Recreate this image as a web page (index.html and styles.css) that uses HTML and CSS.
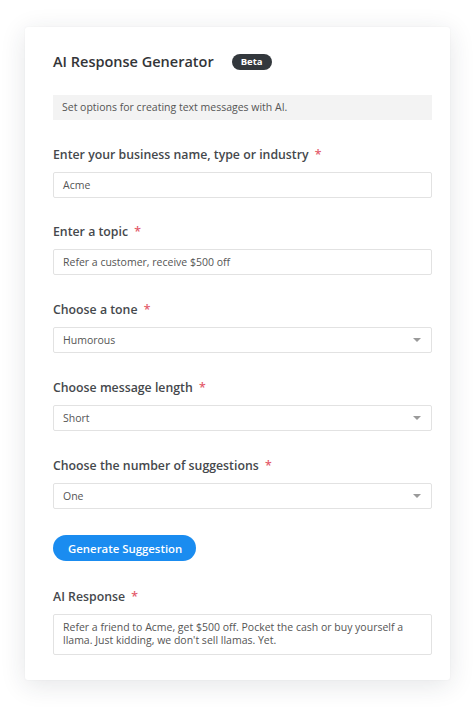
FILE: index.html
```html
<!DOCTYPE html>
<html>
<head>
<meta charset="utf-8">
<link rel="stylesheet" href="styles.css">
</head>
<body>
<div class="card">
  <div class="header">
    <h1 class="title">AI Response Generator</h1>
    <span class="badge">Beta</span>
  </div>
  <div class="info">Set options for creating text messages with AI.</div>
  <div class="field">
    <div class="label">Enter your business name, type or industry <span class="req">*</span></div>
    <div class="input">Acme</div>
  </div>
  <div class="field field-tight">
    <div class="label">Enter a topic <span class="req">*</span></div>
    <div class="input">Refer a customer, receive $500 off</div>
  </div>
  <div class="field">
    <div class="label">Choose a tone <span class="req">*</span></div>
    <div class="input select">Humorous<span class="arrow"></span></div>
  </div>
  <div class="field">
    <div class="label">Choose message length <span class="req">*</span></div>
    <div class="input select">Short<span class="arrow"></span></div>
  </div>
  <div class="field">
    <div class="label">Choose the number of suggestions <span class="req">*</span></div>
    <div class="input select">One<span class="arrow"></span></div>
  </div>
  <div class="actions">
    <button class="btn">Generate Suggestion</button>
  </div>
  <div class="field field-loose">
    <div class="label">AI Response <span class="req">*</span></div>
    <div class="textarea">Refer a friend to Acme, get $500 off. Pocket the cash or buy yourself a llama. Just kidding, we don't sell llamas. Yet.</div>
  </div>
</div>
</body>
</html>
```
FILE: styles.css
```css
html, body {
  margin: 0;
  padding: 0;
  background: #ffffff;
}
body {
  font-family: "Open Sans", "Noto Sans", sans-serif;
  padding: 27px 0 27px 25px;
}
.card {
  width: 425px;
  box-sizing: border-box;
  height: 653px;
  background: #fff;
  border-radius: 3px;
  box-shadow: 0 5px 26px rgba(30, 40, 60, 0.12), 0 0 2px rgba(0, 0, 0, 0.05);
  padding: 25px 18px 0 28px;
  display: flex;
  flex-direction: column;
}
.header {
  display: flex;
  align-items: center;
  height: 20px;
  gap: 18px;
}
.title {
  margin: 0;
  font-size: 14.5px;
  font-weight: 600;
  color: #333538;
  line-height: 20px;
}
.badge {
  background: #33383d;
  color: #fff;
  font-size: 9.5px;
  font-weight: 700;
  line-height: 16px;
  height: 16px;
  padding: 0 9px;
  border-radius: 9px;
}
.info {
  margin-top: 23px;
  height: 25px;
  line-height: 25px;
  background: #f3f3f3;
  color: #555;
  font-size: 10.5px;
  padding: 0 9px;
}
.field {
  margin-top: 26px;
  display: flex;
  flex-direction: column;
}
.field-tight {
  margin-top: 25px;
}
.field-loose {
  margin-top: 27px;
}
.label {
  font-size: 12.3px;
  font-weight: 600;
  color: #45484c;
  line-height: 18px;
  margin-bottom: 8px;
}
.req {
  color: #e35a6a;
  margin-left: 3px;
}
.input {
  height: 26px;
  box-sizing: border-box;
  border: 1px solid #e2e2e2;
  border-radius: 2px;
  font-size: 10.5px;
  color: #555;
  line-height: 24px;
  padding: 0 9px;
  display: flex;
  align-items: center;
  justify-content: space-between;
}
.arrow {
  width: 0;
  height: 0;
  border-left: 4px solid transparent;
  border-right: 4px solid transparent;
  border-top: 4px solid #9a9a9a;
  margin-right: 1px;
}
.actions {
  margin-top: 26px;
  display: flex;
}
.btn {
  font-family: inherit;
  height: 26px;
  border: none;
  border-radius: 13px;
  background: #1a8cf0;
  color: #fff;
  font-size: 11.4px;
  font-weight: 600;
  padding: 0 14px 0 15px;
  cursor: pointer;
}
.textarea {
  height: 41px;
  box-sizing: border-box;
  border: 1px solid #e2e2e2;
  border-radius: 2px;
  font-size: 10.5px;
  color: #555;
  line-height: 13px;
  padding: 6px 9px;
}
```
